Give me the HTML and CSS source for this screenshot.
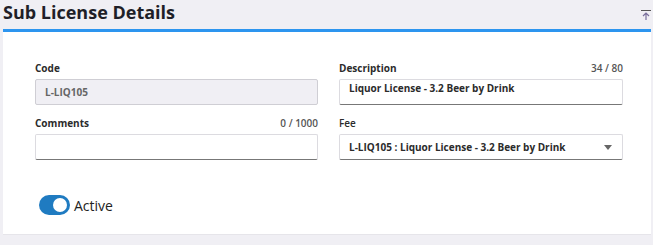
FILE: index.html
```html
<!DOCTYPE html>
<html lang="en">
<head>
    <meta charset="UTF-8">
    <title>Sub License Details</title>
    <link rel="stylesheet" href="styles.css">
</head>
<body>
    <div class="panel">
        <div class="panel-header">
            <h2>Sub License Details</h2>
            <span class="collapse-icon">
                <svg width="10" height="11" viewBox="0 0 10 11">
                    <line x1="0" y1="0.5" x2="10" y2="0.5" stroke="#555" stroke-width="1"/>
                    <path d="M5 10 V3 M2 6 L5 3 L8 6" stroke="#7a6f9c" stroke-width="1.2" fill="none"/>
                </svg>
            </span>
        </div>

        <div class="panel-body">
            <div class="form-grid">
                <div class="field">
                    <div class="field-label"><span>Code</span></div>
                    <div class="input readonly">L-LIQ105</div>
                </div>
                <div class="field">
                    <div class="field-label"><span>Description</span><span class="count">34 / 80</span></div>
                    <div class="input textarea">Liquor License - 3.2 Beer by Drink</div>
                </div>
                <div class="field">
                    <div class="field-label"><span>Comments</span><span class="count">0 / 1000</span></div>
                    <div class="input"></div>
                </div>
                <div class="field">
                    <div class="field-label"><span class="plain">Fee</span></div>
                    <div class="input select">
                        <span>L-LIQ105 : Liquor License - 3.2 Beer by Drink</span>
                        <span class="caret"></span>
                    </div>
                </div>
            </div>

            <div class="toggle-row">
                <span class="toggle"><span class="knob"></span></span>
                <span class="toggle-text">Active</span>
            </div>
        </div>
    </div>
</body>
</html>
```

FILE: styles.css
```css
body {
    margin: 0;
    font-family: "Open Sans", "Liberation Sans", sans-serif;
    background-color: #f0eff4;
    color: #2b2b2b;
}

.panel {
    padding: 0 2px 4px 3px;
}

.panel-header {
    height: 29px;
    display: flex;
    justify-content: space-between;
    align-items: flex-start;
}

.panel-header h2 {
    margin: 0;
    font-size: 18px;
    font-weight: 700;
    line-height: 25px;
    color: #1f1f28;
}

.collapse-icon {
    margin-top: 10px;
    line-height: 0;
}

.panel-body {
    background-color: #fff;
    border-top: 3px solid #2d95ef;
    border-bottom: 1px solid #e6e5ea;
    height: 206px;
    box-sizing: border-box;
    padding: 29px 28px 0 32px;
}

.form-grid {
    display: grid;
    grid-template-columns: 283px 284px;
    column-gap: 21px;
    row-gap: 11px;
}

.field-label {
    display: flex;
    justify-content: space-between;
    font-size: 10px;
    font-weight: 700;
    line-height: 14px;
    margin-bottom: 4px;
    color: #2b2b2b;
}

.field-label .plain {
    font-weight: 600;
}

.field-label .count {
    font-weight: 600;
    color: #555;
}

.input {
    height: 26px;
    box-sizing: border-box;
    border: 1px solid #dcdbe0;
    border-bottom: 1px solid #777;
    border-radius: 2px;
    font-size: 10px;
    font-weight: 700;
    padding: 0 9px;
    line-height: 24px;
    color: #2b2b2b;
    background: #fff;
}

.input.readonly {
    background-color: #f0eff4;
    border-color: #cfced4;
    color: #666;
}

.input.textarea {
    line-height: 14px;
    padding-top: 1px;
}

.input.select {
    display: flex;
    justify-content: space-between;
    align-items: center;
}

.caret {
    width: 0;
    height: 0;
    border-left: 4px solid transparent;
    border-right: 4px solid transparent;
    border-top: 5px solid #666;
    margin-right: 1px;
}

.toggle-row {
    display: flex;
    align-items: center;
    margin-top: 35px;
    margin-left: 4px;
}

.toggle {
    width: 31px;
    height: 20px;
    border-radius: 10px;
    background-color: #1f7bc1;
    position: relative;
    margin-right: 4px;
}

.toggle .knob {
    position: absolute;
    right: 3px;
    top: 3px;
    width: 14px;
    height: 14px;
    border-radius: 50%;
    background: #fff;
}

.toggle-text {
    font-size: 14px;
    color: #222;
}
```
